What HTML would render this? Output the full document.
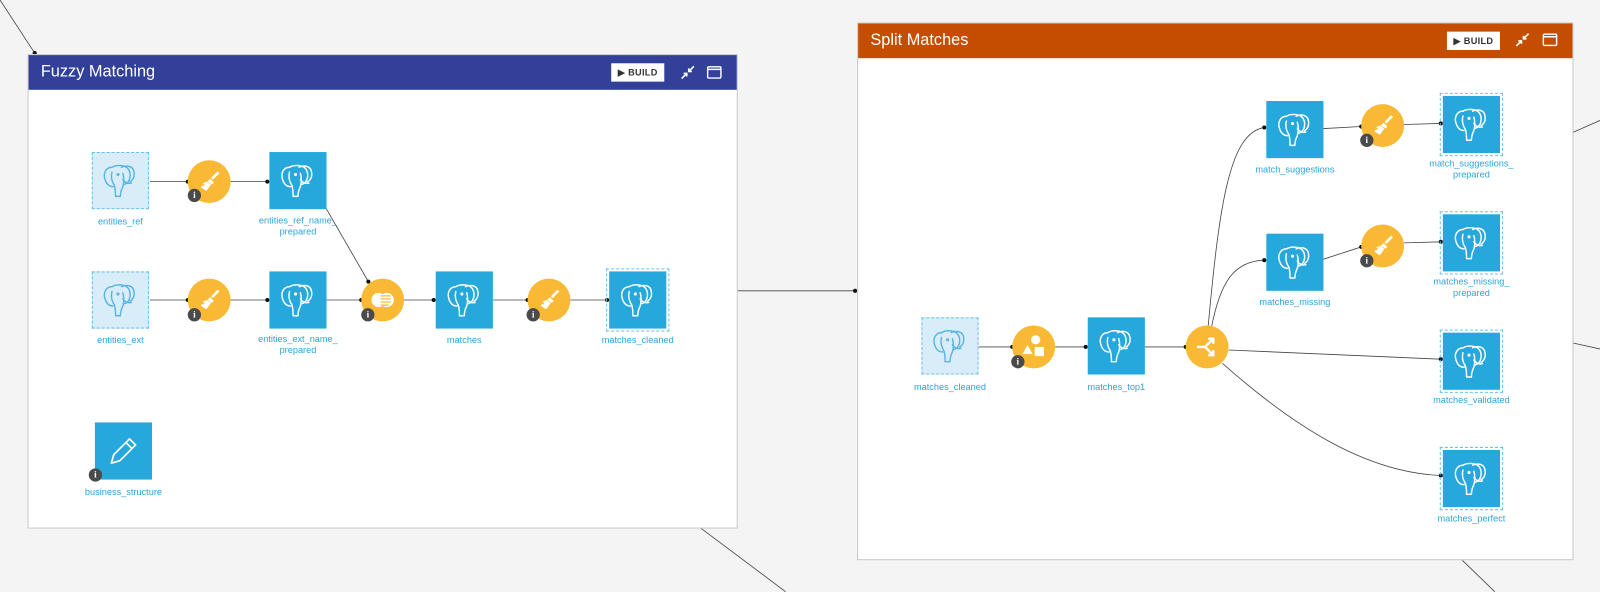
<!DOCTYPE html>
<html><head><meta charset="utf-8"><style>
html,body{margin:0;padding:0;width:1600px;height:591px;overflow:hidden;background:#f4f4f4;font-family:"Liberation Sans",sans-serif}
#w{position:absolute;left:0;top:0;width:1568px;height:580px;transform:scale(1.0204);transform-origin:0 0}
.panel{position:absolute;background:#fff;border:1px solid #c8c8c8;box-sizing:border-box}
.hd{position:absolute;left:0;top:0;right:0;height:34px;color:#fff;font-size:16px;line-height:34px;padding-left:12px}
.build{position:absolute;top:8px;width:52px;height:18px;background:#fff;color:#333;font-size:9px;font-weight:bold;line-height:18px;text-align:center;letter-spacing:.3px}
.ds{position:absolute;width:56px;height:56px;box-sizing:border-box;background:#27a8dc}
.ds svg{position:absolute;left:9px;top:9px}
.light{background:#d8edf8;border:1.5px dashed #6cc0ea}
.light svg{left:8px;top:8px}
.out{outline:1.5px dashed #6cc0ea;outline-offset:2px}
.rc{position:absolute;width:42px;height:42px;border-radius:50%;background:#f9b934}
.rc svg{position:absolute;left:9px;top:9px}
.inf{position:absolute;width:13px;height:13px;border-radius:50%;background:#4a4a4a;color:#fff;font-size:9px;font-weight:bold;text-align:center;line-height:13px;font-family:"Liberation Serif",serif}
.lb{position:absolute;width:120px;text-align:center;color:#2ba3da;font-size:9px;line-height:11px}
svg.lines{position:absolute;left:0;top:0}
</style></head><body><div id="w">
<svg class="lines" width="1568" height="580" style="z-index:0">
<g stroke="#444" stroke-width=".8" fill="none">
<line x1="0" y1="0" x2="34" y2="52"/>
<line x1="686" y1="517" x2="770" y2="580"/>
<line x1="1432" y1="548" x2="1465" y2="580"/>
<line x1="1541" y1="130" x2="1568" y2="118"/>
<line x1="1541" y1="336" x2="1568" y2="342"/>
<line x1="722" y1="285" x2="838" y2="285"/>
</g><circle cx="34" cy="52" r="2" fill="#111"/><circle cx="838" cy="285" r="2" fill="#111"/>
</svg>

<div class="panel" style="left:27px;top:53px;width:696px;height:465px">
<div class="hd" style="background:#33409a">Fuzzy Matching</div>
<div class="build" style="left:571px">▶ BUILD</div>
<svg style="position:absolute;left:638px;top:9px" width="16" height="16" viewBox="0 0 16 16" stroke="#fff" stroke-width="1.6" fill="none"><path d="M2 14 7 9M4 9h3v3M14 2 9 7M9 4v3h3"/></svg>
<svg style="position:absolute;left:664px;top:10px" width="16" height="14" viewBox="0 0 16 14" stroke="#fff" stroke-width="1.4" fill="none"><rect x="1.5" y="1.5" width="13" height="11" rx="1"/><line x1="1.5" y1="4" x2="14.5" y2="4"/></svg>
</div>

<div class="panel" style="left:840px;top:22px;width:702px;height:527px">
<div class="hd" style="background:#c44d00">Split Matches</div>
<div class="build" style="left:577px">▶ BUILD</div>
<svg style="position:absolute;left:643px;top:8px" width="16" height="16" viewBox="0 0 16 16" stroke="#fff" stroke-width="1.6" fill="none"><path d="M2 14 7 9M4 9h3v3M14 2 9 7M9 4v3h3"/></svg>
<svg style="position:absolute;left:670px;top:9px" width="16" height="14" viewBox="0 0 16 14" stroke="#fff" stroke-width="1.4" fill="none"><rect x="1.5" y="1.5" width="13" height="11" rx="1"/><line x1="1.5" y1="4" x2="14.5" y2="4"/></svg>
</div>

<svg class="lines" width="1568" height="580">
<g stroke="#444" stroke-width=".8" fill="none">
<line x1="147" y1="178" x2="184" y2="178"/><line x1="226" y1="178" x2="262" y2="178"/>
<line x1="316" y1="198" x2="361" y2="276"/>
<line x1="147" y1="294" x2="184" y2="294"/><line x1="226" y1="294" x2="262" y2="294"/>
<line x1="320" y1="294" x2="354" y2="294"/><line x1="396" y1="294" x2="425" y2="294"/>
<line x1="483" y1="294" x2="517" y2="294"/><line x1="559" y1="294" x2="595" y2="294"/>
<line x1="959" y1="340" x2="992" y2="340"/><line x1="1034" y1="340" x2="1064" y2="340"/>
<line x1="1122" y1="340" x2="1162" y2="340"/>
<line x1="1297" y1="126" x2="1334" y2="124"/><line x1="1376" y1="122" x2="1412" y2="121"/>
<line x1="1297" y1="254" x2="1334" y2="242"/><line x1="1376" y1="238" x2="1412" y2="237"/>
<path d="M1184 320C1195 200 1205 130 1239 125"/>
<path d="M1187 322C1196 275 1210 256 1239 255"/>
<path d="M1204 343C1300 347 1380 351 1412 352"/>
<path d="M1198 356C1270 420 1340 463 1412 466"/>
</g>
<g fill="#111">
<circle cx="184" cy="178" r="2"/><circle cx="262" cy="178" r="2"/><circle cx="361" cy="276" r="2"/>
<circle cx="184" cy="294" r="2"/><circle cx="262" cy="294" r="2"/><circle cx="354" cy="294" r="2"/><circle cx="425" cy="294" r="2"/><circle cx="517" cy="294" r="2"/><circle cx="595" cy="294" r="2"/>
<circle cx="992" cy="340" r="2"/><circle cx="1064" cy="340" r="2"/><circle cx="1162" cy="340" r="2"/>
<circle cx="1239" cy="125" r="2"/><circle cx="1334" cy="124" r="2"/><circle cx="1412" cy="121" r="2"/>
<circle cx="1239" cy="255" r="2"/><circle cx="1334" cy="242" r="2"/><circle cx="1412" cy="237" r="2"/>
<circle cx="1412" cy="352" r="2"/><circle cx="1412" cy="466" r="2"/>
</g></svg>

<svg width="0" height="0" style="position:absolute"><defs>
<g id="el" fill="none" stroke-width="1.2" stroke-linecap="round" stroke-linejoin="round">
<path d="M9 5C4 5 2 10 3 14c1 4 3 7 7 7"/>
<path d="M9 5c3-2 9-2 12 0 3 2 4 7 2 11-1 2-3 3-4 3"/>
<path d="M17 5c4-2 9-1 10 3 1 4 0 7-3 9"/>
<path d="M9 9c-1 4 0 8 2 11 1 3 1 6 1 9h4c0-3 1-6 2-8 1-3 1-8 0-11"/>
<path d="M18 15c1 2 4 4 7 3"/>
<circle cx="14" cy="11" r=".7"/>
</g>
<g id="br" fill="#fff"><path d="M22 2l2 2-7 7-2-2z"/><path d="M14 10l4 4-2 2-5-3z"/><path d="M10 13l5 3-5 7-6-4 2-2 1 1 1-2-2-1z"/></g>
</defs></svg>

<!-- left nodes -->
<div class="ds light" style="left:90px;top:149px"><svg width="38" height="38" viewBox="0 0 32 32"><use href="#el" stroke="#5ab5e3"/></svg></div>
<div class="lb" style="left:58px;top:212px">entities_ref</div>
<div class="rc" style="left:184px;top:157px"><svg width="24" height="24" viewBox="0 0 26 26"><use href="#br"/></svg></div><div class="inf" style="left:184px;top:185px">i</div>
<div class="ds" style="left:264px;top:149px"><svg width="38" height="38" viewBox="0 0 32 32"><use href="#el" stroke="#fff"/></svg></div>
<div class="lb" style="left:232px;top:211px">entities_ref_name_<br>prepared</div>

<div class="ds light" style="left:90px;top:266px"><svg width="38" height="38" viewBox="0 0 32 32"><use href="#el" stroke="#5ab5e3"/></svg></div>
<div class="lb" style="left:58px;top:328px">entities_ext</div>
<div class="rc" style="left:184px;top:273px"><svg width="24" height="24" viewBox="0 0 26 26"><use href="#br"/></svg></div><div class="inf" style="left:184px;top:302px">i</div>
<div class="ds" style="left:264px;top:266px"><svg width="38" height="38" viewBox="0 0 32 32"><use href="#el" stroke="#fff"/></svg></div>
<div class="lb" style="left:232px;top:327px">entities_ext_name_<br>prepared</div>
<div class="rc" style="left:354px;top:273px"><svg width="24" height="24" viewBox="0 0 24 24"><circle cx="8" cy="12" r="7" fill="#fff"/><circle cx="16" cy="12" r="7" fill="#fff"/><g stroke="#f9b934" stroke-width="1.2"><line x1="10" y1="8" x2="20" y2="8"/><line x1="10" y1="11" x2="20" y2="11"/><line x1="10" y1="14" x2="20" y2="14"/><line x1="10" y1="17" x2="18" y2="17"/></g></svg></div><div class="inf" style="left:354px;top:302px">i</div>
<div class="ds" style="left:427px;top:266px"><svg width="38" height="38" viewBox="0 0 32 32"><use href="#el" stroke="#fff"/></svg></div>
<div class="lb" style="left:395px;top:328px">matches</div>
<div class="rc" style="left:517px;top:273px"><svg width="24" height="24" viewBox="0 0 26 26"><use href="#br"/></svg></div><div class="inf" style="left:516px;top:302px">i</div>
<div class="ds out" style="left:597px;top:266px"><svg width="38" height="38" viewBox="0 0 32 32"><use href="#el" stroke="#fff"/></svg></div>
<div class="lb" style="left:565px;top:328px">matches_cleaned</div>

<div class="ds" style="left:93px;top:414px"><svg width="38" height="38" viewBox="0 0 32 32" fill="none" stroke="#fff" stroke-width="1.4" stroke-linejoin="round"><path d="M6 26l2-7L21 6l5 5-13 13z"/><path d="M18 9l5 5"/></svg></div>
<div class="inf" style="left:87px;top:459px">i</div>
<div class="lb" style="left:61px;top:477px">business_structure</div>

<!-- right nodes -->
<div class="ds light" style="left:903px;top:311px"><svg width="38" height="38" viewBox="0 0 32 32"><use href="#el" stroke="#5ab5e3"/></svg></div>
<div class="lb" style="left:871px;top:374px">matches_cleaned</div>
<div class="rc" style="left:992px;top:319px"><svg width="24" height="24" viewBox="0 0 24 24" fill="#fff"><circle cx="14" cy="5" r="4.5"/><path d="M6 10l5 9H1z"/><rect x="13" y="12" width="9" height="9"/></svg></div><div class="inf" style="left:991px;top:348px">i</div>
<div class="ds" style="left:1066px;top:311px"><svg width="38" height="38" viewBox="0 0 32 32"><use href="#el" stroke="#fff"/></svg></div>
<div class="lb" style="left:1034px;top:374px">matches_top1</div>
<div class="rc" style="left:1162px;top:319px"><svg width="24" height="24" viewBox="0 0 24 24" fill="none" stroke="#fff" stroke-width="2.4"><path d="M2 12h8l8-8M10 12l8 8M13 4h5v5M13 20h5v-5"/></svg></div>

<div class="ds" style="left:1241px;top:99px"><svg width="38" height="38" viewBox="0 0 32 32"><use href="#el" stroke="#fff"/></svg></div>
<div class="lb" style="left:1209px;top:161px">match_suggestions</div>
<div class="rc" style="left:1334px;top:102px"><svg width="24" height="24" viewBox="0 0 26 26"><use href="#br"/></svg></div><div class="inf" style="left:1333px;top:131px">i</div>
<div class="ds out" style="left:1414px;top:94px"><svg width="38" height="38" viewBox="0 0 32 32"><use href="#el" stroke="#fff"/></svg></div>
<div class="lb" style="left:1382px;top:155px">match_suggestions_<br>prepared</div>

<div class="ds" style="left:1241px;top:229px"><svg width="38" height="38" viewBox="0 0 32 32"><use href="#el" stroke="#fff"/></svg></div>
<div class="lb" style="left:1209px;top:291px">matches_missing</div>
<div class="rc" style="left:1334px;top:220px"><svg width="24" height="24" viewBox="0 0 26 26"><use href="#br"/></svg></div><div class="inf" style="left:1333px;top:249px">i</div>
<div class="ds out" style="left:1414px;top:210px"><svg width="38" height="38" viewBox="0 0 32 32"><use href="#el" stroke="#fff"/></svg></div>
<div class="lb" style="left:1382px;top:271px">matches_missing_<br>prepared</div>

<div class="ds out" style="left:1414px;top:326px"><svg width="38" height="38" viewBox="0 0 32 32"><use href="#el" stroke="#fff"/></svg></div>
<div class="lb" style="left:1382px;top:387px">matches_validated</div>
<div class="ds out" style="left:1414px;top:441px"><svg width="38" height="38" viewBox="0 0 32 32"><use href="#el" stroke="#fff"/></svg></div>
<div class="lb" style="left:1382px;top:503px">matches_perfect</div>
</div></body></html>
